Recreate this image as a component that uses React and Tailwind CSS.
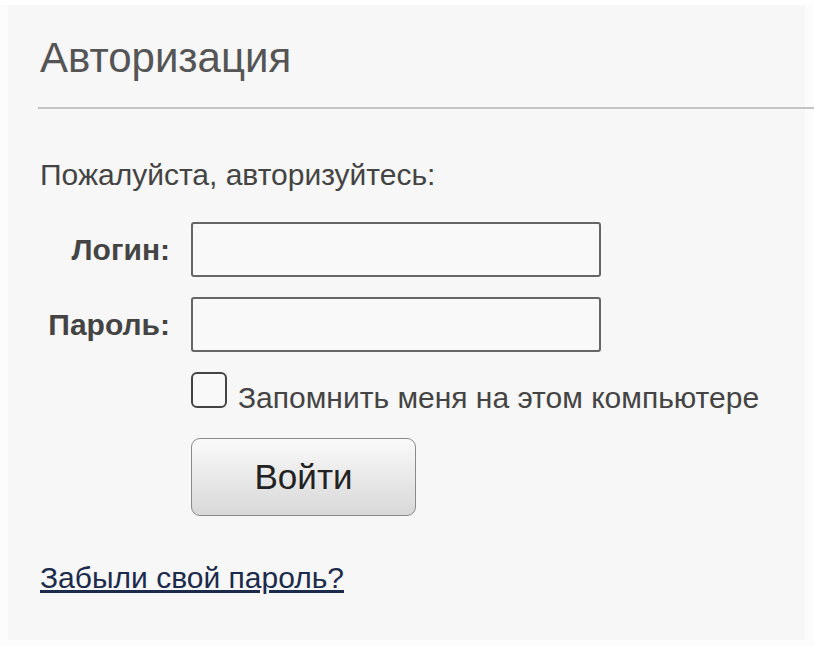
import React from 'react'

const App = () => {
  return (
    <div className="w-[814px] h-[646px] bg-[#fcfcfc] font-['Liberation_Sans',Arial,sans-serif]">
      <div className="ml-[8px] mt-[5px] w-[797px] h-[635px] bg-[#f7f7f7] pt-[29px]">
        <h1 className="pl-[32px] text-[42px] leading-[48px] text-[#555] font-normal">Авторизация</h1>
        <div className="ml-[30px] mt-[25px] mr-[-9px] h-[2px] bg-[#c4c4c4]" />

        <p className="pl-[32px] mt-[48px] text-[30px] leading-[36px] text-[#444]">Пожалуйста, авторизуйтесь:</p>

        <div className="mt-[29px] flex flex-col gap-[20px]">
          <div className="flex items-center">
            <label className="w-[183px] pr-[21px] text-right text-[30px] font-bold text-[#444]">Логин:</label>
            <input type="text" className="w-[410px] h-[55px] border-2 border-[#666] rounded-[3px] bg-[#f9f9f9] outline-none" />
          </div>
          <div className="flex items-center">
            <label className="w-[183px] pr-[21px] text-right text-[30px] font-bold text-[#444]">Пароль:</label>
            <input type="password" className="w-[410px] h-[55px] border-2 border-[#666] rounded-[3px] bg-[#f9f9f9] outline-none" />
          </div>
        </div>

        <div className="mt-[20px] ml-[183px] flex items-start">
          <span className="w-[36px] h-[36px] border-2 border-[#444] rounded-[6px] bg-[#f9f9f9]" />
          <span className="ml-[11px] mt-[8px] text-[30px] leading-[36px] text-[#444]">Запомнить меня на этом компьютере</span>
        </div>

        <button className="block mt-[22px] ml-[183px] w-[225px] h-[78px] rounded-[9px] border border-[#8a8a8a] bg-gradient-to-b from-[#fafafa] to-[#d8d8d8] text-[35px] text-[#222]">
          Войти
        </button>

        <div className="mt-[44px] pl-[32px]">
          <a href="#" className="text-[30px] leading-[36px] text-[#1c2b4c] underline">Забыли свой пароль?</a>
        </div>
      </div>
    </div>
  )
}

export default App
